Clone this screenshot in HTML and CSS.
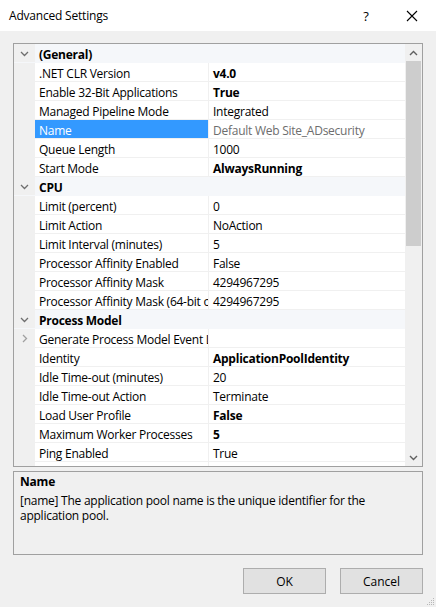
FILE: index.html
```html
<!DOCTYPE html>
<html>
<head>
<meta charset="utf-8">
<link rel="stylesheet" href="styles.css">
</head>
<body>
<div class="window">
  <div class="titlebar">
    <span class="title">Advanced Settings</span>
    <span class="help">?</span>
    <span class="close"><svg width="12" height="12" viewBox="0 0 12 12"><path d="M1 1L11 11M11 1L1 11" stroke="#000" stroke-width="1.1" fill="none"/></svg></span>
  </div>
  <div class="content">
    <div class="grid">
      <div class="rows">
        <div class="row cat"><span class="gut"><svg width="9" height="6" viewBox="0 0 9 6"><path d="M1 1L4.5 4.5L8 1" stroke="#6e6e6e" stroke-width="1.3" fill="none"/></svg></span><span class="catname">(General)</span></div>
        <div class="row"><span class="gut"></span><span class="name">.NET CLR Version</span><span class="val b">v4.0</span></div>
        <div class="row"><span class="gut"></span><span class="name">Enable 32-Bit Applications</span><span class="val b">True</span></div>
        <div class="row"><span class="gut"></span><span class="name">Managed Pipeline Mode</span><span class="val">Integrated</span></div>
        <div class="row"><span class="gut"></span><span class="name sel">Name</span><span class="val dim">Default Web Site_ADsecurity</span></div>
        <div class="row"><span class="gut"></span><span class="name">Queue Length</span><span class="val">1000</span></div>
        <div class="row"><span class="gut"></span><span class="name">Start Mode</span><span class="val b">AlwaysRunning</span></div>
        <div class="row cat"><span class="gut"><svg width="9" height="6" viewBox="0 0 9 6"><path d="M1 1L4.5 4.5L8 1" stroke="#6e6e6e" stroke-width="1.3" fill="none"/></svg></span><span class="catname">CPU</span></div>
        <div class="row"><span class="gut"></span><span class="name">Limit (percent)</span><span class="val">0</span></div>
        <div class="row"><span class="gut"></span><span class="name">Limit Action</span><span class="val">NoAction</span></div>
        <div class="row"><span class="gut"></span><span class="name">Limit Interval (minutes)</span><span class="val">5</span></div>
        <div class="row"><span class="gut"></span><span class="name">Processor Affinity Enabled</span><span class="val">False</span></div>
        <div class="row"><span class="gut"></span><span class="name">Processor Affinity Mask</span><span class="val">4294967295</span></div>
        <div class="row"><span class="gut"></span><span class="name">Processor Affinity Mask (64-bit option)</span><span class="val">4294967295</span></div>
        <div class="row cat"><span class="gut"><svg width="9" height="6" viewBox="0 0 9 6"><path d="M1 1L4.5 4.5L8 1" stroke="#6e6e6e" stroke-width="1.3" fill="none"/></svg></span><span class="catname">Process Model</span></div>
        <div class="row"><span class="gut"><svg width="6" height="9" viewBox="0 0 6 9"><path d="M1 1L4.5 4.5L1 8" stroke="#a0a0a0" stroke-width="1.3" fill="none"/></svg></span><span class="name">Generate Process Model Event Log Entry</span><span class="val"></span></div>
        <div class="row"><span class="gut"></span><span class="name">Identity</span><span class="val b">ApplicationPoolIdentity</span></div>
        <div class="row"><span class="gut"></span><span class="name">Idle Time-out (minutes)</span><span class="val">20</span></div>
        <div class="row"><span class="gut"></span><span class="name">Idle Time-out Action</span><span class="val">Terminate</span></div>
        <div class="row"><span class="gut"></span><span class="name">Load User Profile</span><span class="val b">False</span></div>
        <div class="row"><span class="gut"></span><span class="name">Maximum Worker Processes</span><span class="val b">5</span></div>
        <div class="row"><span class="gut"></span><span class="name">Ping Enabled</span><span class="val">True</span></div>
        <div class="row"><span class="gut"></span><span class="name"></span><span class="val"></span></div>
      </div>
      <div class="scrollbar">
        <div class="arrow"><svg width="9" height="6" viewBox="0 0 9 6"><path d="M1 5L4.5 1.5L8 5" stroke="#606060" stroke-width="1.4" fill="none"/></svg></div>
        <div class="track"><div class="thumb"></div></div>
        <div class="arrow"><svg width="9" height="6" viewBox="0 0 9 6"><path d="M1 1L4.5 4.5L8 1" stroke="#606060" stroke-width="1.4" fill="none"/></svg></div>
      </div>
    </div>
    <div class="desc">
      <div class="desc-title">Name</div>
      <div class="desc-text">[name] The application pool name is the unique identifier for the application pool.</div>
    </div>
    <div class="buttons">
      <button class="btn">OK</button>
      <button class="btn">Cancel</button>
    </div>
  </div>
  <div class="grip"><svg width="10" height="10" viewBox="0 0 10 10"><g fill="#b8b8b8"><rect x="8" y="2" width="1" height="1"/><rect x="6" y="4" width="1" height="1"/><rect x="8" y="4" width="1" height="1"/><rect x="4" y="6" width="1" height="1"/><rect x="6" y="6" width="1" height="1"/><rect x="8" y="6" width="1" height="1"/><rect x="2" y="8" width="1" height="1"/><rect x="4" y="8" width="1" height="1"/><rect x="6" y="8" width="1" height="1"/><rect x="8" y="8" width="1" height="1"/></g></svg></div>
</div>
</body>
</html>
```
FILE: styles.css
```css
html, body {
  margin: 0;
  padding: 0;
}
body {
  background: #f0f0f0;
  font-family: "Open Sans", "Noto Sans", sans-serif;
  font-size: 12px;
  color: #000;
}
.window {
  width: 436px;
  height: 607px;
  position: relative;
  overflow: hidden;
  background: #f0f0f0;
}
.titlebar {
  height: 31px;
  background: #fff;
  display: flex;
  align-items: center;
}
.title {
  margin-left: 9px;
  font-size: 12px;
  flex: 1;
  letter-spacing: -0.2px;
}
.help {
  width: 16px;
  text-align: center;
  font-size: 13px;
  margin-right: 32px;
}
.close {
  width: 14px;
  display: flex;
  margin-right: 16px;
}
.content {
  padding: 12px 13px 0 13px;
}
.grid {
  height: 422px;
  border: 1px solid #a0a0a0;
  background: #fff;
  display: flex;
  overflow: hidden;
}
.rows {
  flex: 1;
  display: flex;
  flex-direction: column;
  overflow: hidden;
}
.row {
  height: 18px;
  min-height: 18px;
  border-bottom: 1px solid #f0f0f0;
  display: flex;
  align-items: stretch;
  line-height: 17px;
  letter-spacing: -0.25px;
}
.gut {
  width: 21px;
  flex: none;
  background: #f0f0f0;
  display: flex;
  align-items: center;
  justify-content: center;
  padding-top: 1px;
  box-sizing: border-box;
}
.name {
  width: 169px;
  flex: none;
  padding-left: 4px;
  padding-top: 2px;
  box-sizing: content-box;
  border-right: 1px solid #f0f0f0;
  white-space: nowrap;
  overflow: hidden;
  text-overflow: clip;
}
.name.sel {
  background: #3399ff;
  color: #fff;
}
.val {
  flex: 1;
  padding-left: 4px;
  padding-top: 2px;
  white-space: nowrap;
  overflow: hidden;
}
.b { font-weight: bold; }
.dim { color: #6d6d6d; }
.row.cat {
  background: #f5f7fa;
  border-bottom-color: #f5f7fa;
}
.catname {
  padding-left: 4px;
  padding-top: 2px;
  font-weight: bold;
  flex: 1;
}
.scrollbar {
  width: 17px;
  flex: none;
  background: #f0f0f0;
  display: flex;
  flex-direction: column;
}
.arrow {
  height: 17px;
  display: flex;
  align-items: center;
  justify-content: center;
}
.track {
  flex: 1;
  padding: 0 1px;
}
.thumb {
  height: 185px;
  background: #cdcdcd;
}
.desc {
  margin-top: 4px;
  height: 82px;
  border: 1px solid #a0a0a0;
  padding: 0 6px;
  box-sizing: content-box;
}
.desc-title {
  font-weight: bold;
  margin-top: 2px;
  line-height: 16px;
  letter-spacing: -0.2px;
}
.desc-text {
  line-height: 15px;
  margin-top: 3px;
  letter-spacing: -0.25px;
}
.buttons {
  display: flex;
  justify-content: flex-end;
  gap: 14px;
  margin-top: 13px;
}
.btn {
  width: 83px;
  height: 26px;
  background: #e1e1e1;
  border: 1px solid #adadad;
  font-family: inherit;
  font-size: 12px;
  color: #000;
  padding: 0;
}
.grip {
  position: absolute;
  right: 1px;
  bottom: 1px;
  display: flex;
}
```
